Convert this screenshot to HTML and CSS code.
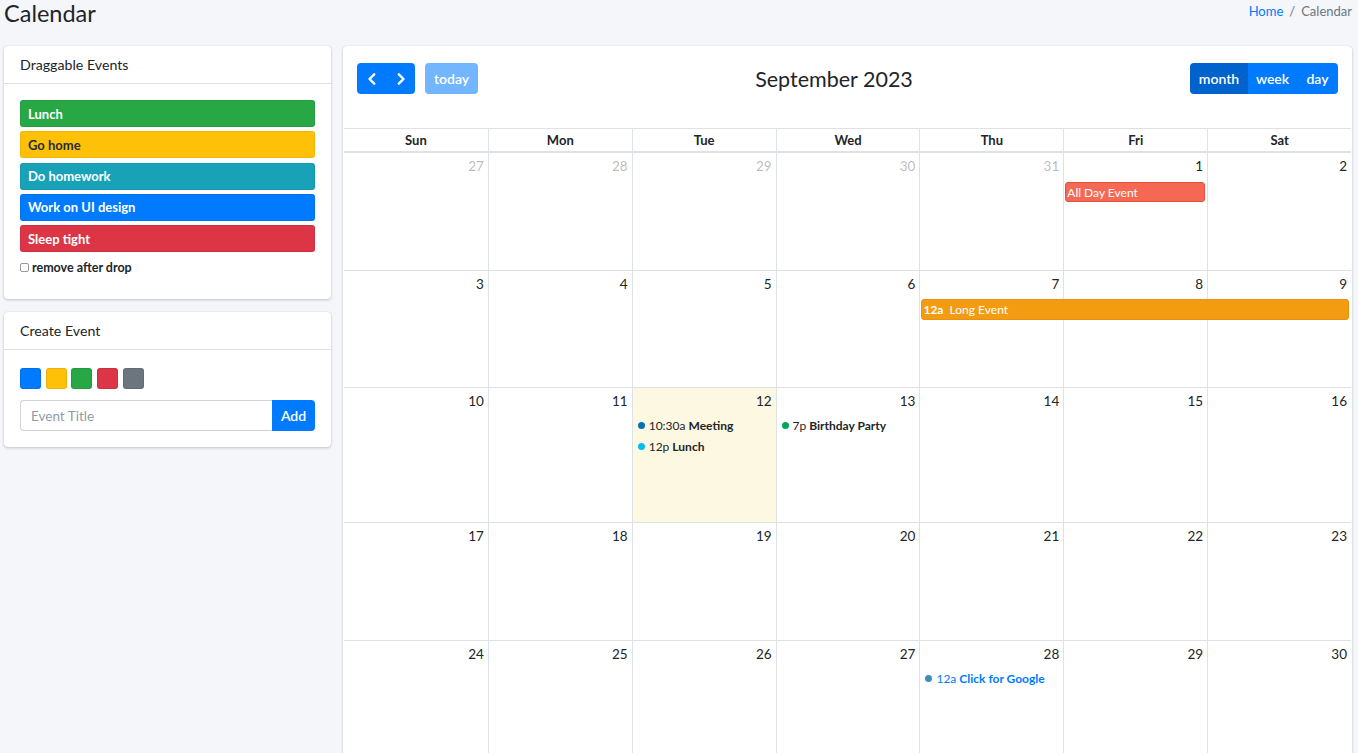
FILE: index.html
```html
<!DOCTYPE html>
<html lang="en">
<head>
<meta charset="utf-8">
<title>Calendar</title>
<link rel="stylesheet" href="styles.css">
</head>
<body>
<div class="page">
  <header class="content-header">
    <h1 class="page-title">Calendar</h1>
    <nav class="breadcrumb"><a href="#" class="crumb-link">Home</a><span class="crumb-sep">/</span><span class="crumb-current">Calendar</span></nav>
  </header>
  <main class="layout">
    <aside class="sidebar">
      <section class="card">
        <div class="card-header">Draggable Events</div>
        <div class="card-body">
          <div class="ext-event bg-green">Lunch</div>
          <div class="ext-event bg-yellow">Go home</div>
          <div class="ext-event bg-teal">Do homework</div>
          <div class="ext-event bg-blue">Work on UI design</div>
          <div class="ext-event bg-red">Sleep tight</div>
          <label class="drop-remove"><span class="checkbox"></span>remove after drop</label>
        </div>
      </section>
      <section class="card">
        <div class="card-header">Create Event</div>
        <div class="card-body create-body">
          <div class="color-chooser">
            <span class="swatch bg-blue"></span>
            <span class="swatch bg-yellow"></span>
            <span class="swatch bg-green"></span>
            <span class="swatch bg-red"></span>
            <span class="swatch bg-gray"></span>
          </div>
          <div class="input-group">
            <input class="title-input" type="text" placeholder="Event Title">
            <button class="add-btn">Add</button>
          </div>
        </div>
      </section>
    </aside>
    <section class="card calendar-card">
      <div class="toolbar">
        <div class="toolbar-chunk">
          <div class="btn-group">
            <button class="btn btn-icon" aria-label="prev"><svg width="14" height="14" viewBox="0 0 14 14"><path d="M9.2 2.3 L4.5 7 L9.2 11.7" fill="none" stroke="#fff" stroke-width="2.4" stroke-linecap="round" stroke-linejoin="round"/></svg></button>
            <button class="btn btn-icon" aria-label="next"><svg width="14" height="14" viewBox="0 0 14 14"><path d="M4.8 2.3 L9.5 7 L4.8 11.7" fill="none" stroke="#fff" stroke-width="2.4" stroke-linecap="round" stroke-linejoin="round"/></svg></button>
          </div>
          <button class="btn btn-today">today</button>
        </div>
        <h2 class="cal-title">September 2023</h2>
        <div class="btn-group">
          <button class="btn btn-view active">month</button>
          <button class="btn btn-view">week</button>
          <button class="btn btn-view">day</button>
        </div>
      </div>
      <div class="grid-head">
        <div class="head-cell">Sun</div><div class="head-cell">Mon</div><div class="head-cell">Tue</div><div class="head-cell">Wed</div><div class="head-cell">Thu</div><div class="head-cell">Fri</div><div class="head-cell">Sat</div>
      </div>
      <div class="weeks">
        <div class="week">
          <div class="day other"><span class="num">27</span></div>
          <div class="day other"><span class="num">28</span></div>
          <div class="day other"><span class="num">29</span></div>
          <div class="day other"><span class="num">30</span></div>
          <div class="day other"><span class="num">31</span></div>
          <div class="day"><span class="num">1</span></div>
          <div class="day"><span class="num">2</span></div>
          <div class="block-event ev-red col-6">All Day Event</div>
        </div>
        <div class="week">
          <div class="day"><span class="num">3</span></div>
          <div class="day"><span class="num">4</span></div>
          <div class="day"><span class="num">5</span></div>
          <div class="day"><span class="num">6</span></div>
          <div class="day"><span class="num">7</span></div>
          <div class="day"><span class="num">8</span></div>
          <div class="day"><span class="num">9</span></div>
          <div class="block-event ev-orange span-thu-sat"><b>12a</b>&nbsp; Long Event</div>
        </div>
        <div class="week week-tall">
          <div class="day"><span class="num">10</span></div>
          <div class="day"><span class="num">11</span></div>
          <div class="day today"><span class="num">12</span>
            <div class="dot-event"><i class="dot dot-navy"></i>10:30a <b>Meeting</b></div>
            <div class="dot-event"><i class="dot dot-aqua"></i>12p <b>Lunch</b></div>
          </div>
          <div class="day"><span class="num">13</span>
            <div class="dot-event"><i class="dot dot-green"></i>7p <b>Birthday Party</b></div>
          </div>
          <div class="day"><span class="num">14</span></div>
          <div class="day"><span class="num">15</span></div>
          <div class="day"><span class="num">16</span></div>
        </div>
        <div class="week">
          <div class="day"><span class="num">17</span></div>
          <div class="day"><span class="num">18</span></div>
          <div class="day"><span class="num">19</span></div>
          <div class="day"><span class="num">20</span></div>
          <div class="day"><span class="num">21</span></div>
          <div class="day"><span class="num">22</span></div>
          <div class="day"><span class="num">23</span></div>
        </div>
        <div class="week">
          <div class="day"><span class="num">24</span></div>
          <div class="day"><span class="num">25</span></div>
          <div class="day"><span class="num">26</span></div>
          <div class="day"><span class="num">27</span></div>
          <div class="day"><span class="num">28</span>
            <a href="#" class="dot-event link-event"><i class="dot dot-light"></i>12a <b>Click for Google</b></a>
          </div>
          <div class="day"><span class="num">29</span></div>
          <div class="day"><span class="num">30</span></div>
        </div>
      </div>
    </section>
  </main>
</div>
</body>
</html>
```
FILE: styles.css
```css
* { box-sizing: border-box; }
html, body { margin: 0; padding: 0; }
body {
  background: #f4f6f9;
  font-family: Lato, "Noto Sans", "Liberation Sans", sans-serif;
  color: #212529;
  font-size: 14px;
}
.page { padding: 0 6px 0 4px; }
.content-header {
  display: flex;
  justify-content: space-between;
  align-items: flex-start;
  height: 46px;
}
.page-title {
  margin: 0;
  font-weight: 400;
  font-size: 23.5px;
  line-height: 27px;
}
.breadcrumb {
  display: flex;
  gap: 6px;
  font-size: 13px;
  line-height: 22px;
}
.crumb-link { color: #007bff; text-decoration: none; }
.crumb-sep, .crumb-current { color: #6c757d; }

.layout {
  display: grid;
  grid-template-columns: 327px 1fr;
  gap: 12px;
  align-items: start;
}
.sidebar { display: flex; flex-direction: column; gap: 13px; }
.card {
  background: #fff;
  border-radius: 4px;
  box-shadow: 0 0 1px rgba(0,0,0,.125), 0 1px 3px rgba(0,0,0,.2);
}
.card-header {
  height: 38px;
  padding: 0 16px;
  display: flex;
  align-items: center;
  font-size: 14.2px;
  border-bottom: 1px solid rgba(0,0,0,.125);
}
.card-body { padding: 16px 16px 24px; }
.ext-event {
  height: 27px;
  margin-bottom: 4.3px;
  border-radius: 3px;
  padding: 0 7px;
  display: flex;
  align-items: center;
  font-weight: 700;
  font-size: 13px;
  color: #fff;
  border: 1px solid rgba(0,0,0,.06);
}
.bg-green { background: #28a745; }
.bg-yellow { background: #ffc107; }
.bg-yellow.ext-event { color: #1f2d3d; }
.bg-teal { background: #17a2b8; }
.bg-blue { background: #007bff; }
.bg-red { background: #dc3545; }
.bg-gray { background: #6c757d; }
.drop-remove {
  display: flex;
  align-items: center;
  font-weight: 700;
  font-size: 12.5px;
  margin-top: 8px;
}
.checkbox {
  width: 9px; height: 9px;
  border: 1px solid #999;
  border-radius: 2px;
  margin-right: 3px;
  background: #fff;
}
.create-body { padding: 18px 16px 16px; }
.color-chooser { display: flex; gap: 4.7px; margin-bottom: 11px; }
.swatch { width: 21px; height: 21px; border-radius: 3px; display: block; border: 1px solid rgba(0,0,0,.08); }
.input-group { display: flex; height: 31px; }
.title-input {
  flex: 1;
  min-width: 0;
  border: 1px solid #ced4da;
  border-right: none;
  border-radius: 4px 0 0 4px;
  padding: 0 10px;
  font-family: inherit;
  font-size: 13.5px;
  color: #495057;
}
.title-input::placeholder { color: #939ba2; }
.add-btn {
  width: 43px;
  border: none;
  background: #007bff;
  color: #fff;
  border-radius: 0 4px 4px 0;
  font-family: inherit;
  font-size: 14px;
  font-weight: 600;
}

.calendar-card { overflow: hidden; padding-bottom: 20px; }
.toolbar {
  display: flex;
  justify-content: space-between;
  align-items: center;
  padding: 17px 14px 34px;
}
.toolbar-chunk { display: flex; gap: 10px; }
.btn-group { display: flex; border-radius: 4px; overflow: hidden; }
.btn {
  height: 31px;
  border: none;
  background: #007bff;
  color: #fff;
  font-family: inherit;
  font-size: 14px;
  font-weight: 600;
  padding: 0 10px;
  display: flex;
  align-items: center;
  justify-content: center;
}
.btn-icon { width: 29px; padding: 0; }
.btn-today { border-radius: 4px; opacity: .55; width: 53px; }
.btn-view { padding: 0 10px; }
.btn-view:first-child { width: 58px; }
.btn-view:nth-child(2) { width: 49px; }
.btn-view:nth-child(3) { width: 41px; }
.btn-view.active { background: #0062cc; }
.cal-title {
  margin: 0;
  font-size: 21.5px;
  font-weight: 400;
  color: #212529;
}

.grid-head, .week {
  display: grid;
  grid-template-columns: repeat(7, minmax(0, 1fr));
}
.grid-head {
  margin: 0 1px;
  border-top: 1px solid #dee2e6;
  border-bottom: 2px solid #dee2e6;
}
.head-cell {
  height: 22px;
  line-height: 22px;
  text-align: center;
  font-weight: 700;
  font-size: 13px;
  border-left: 1px solid #dee2e6;
}
.head-cell:first-child { border-left: none; }
.weeks { margin: 0 1px; }
.week {
  height: 117.5px;
  grid-template-rows: 27px auto 1fr;
  border-bottom: 1px solid #dee2e6;
}
.week-tall { height: 135px; }
.day {
  grid-row: 1 / -1;
  border-left: 1px solid #dee2e6;
  display: flex;
  flex-direction: column;
  align-items: stretch;
  padding: 0 2px;
  min-width: 0;
}
.day:nth-child(1) { grid-column: 1; border-left: none; }
.day:nth-child(2) { grid-column: 2; }
.day:nth-child(3) { grid-column: 3; }
.day:nth-child(4) { grid-column: 4; }
.day:nth-child(5) { grid-column: 5; }
.day:nth-child(6) { grid-column: 6; }
.day:nth-child(7) { grid-column: 7; }
.day.today { background: #fdf8e1; }
.num {
  align-self: flex-end;
  height: 27px;
  line-height: 27px;
  padding-right: 2px;
  font-size: 13.5px;
}
.other .num { color: rgba(33,37,41,.33); }
.block-event {
  grid-row: 2;
  margin: 2px 2px 0;
  height: 20px;
  border-radius: 3px;
  color: #fff;
  font-size: 12px;
  display: flex;
  align-items: center;
  padding: 0 1px;
  white-space: nowrap;
  overflow: hidden;
  position: relative;
  z-index: 1;
}
.block-event b { font-weight: 700; }
.ev-red { background: #f56954; border: 1px solid #e8503b; }
.ev-orange { background: #f39c12; border: 1px solid #e89210; height: 21px; margin-top: 1px; }
.col-6 { grid-column: 6; }
.span-thu-sat { grid-column: 5 / 8; }
.dot-event {
  display: flex;
  align-items: center;
  height: 21px;
  font-size: 12px;
  color: #212529;
  padding-left: 3px;
  white-space: nowrap;
  text-decoration: none;
}
.dot-event b { margin-left: 3px; font-weight: 700; }
.dot {
  width: 7px; height: 7px;
  border-radius: 50%;
  margin-right: 4px;
  display: inline-block;
}
.dot-navy { background: #0073b7; }
.dot-aqua { background: #00c0ef; }
.dot-green { background: #00a65a; }
.dot-light { background: #3c8dbc; }
.link-event { color: #007bff; }
```
